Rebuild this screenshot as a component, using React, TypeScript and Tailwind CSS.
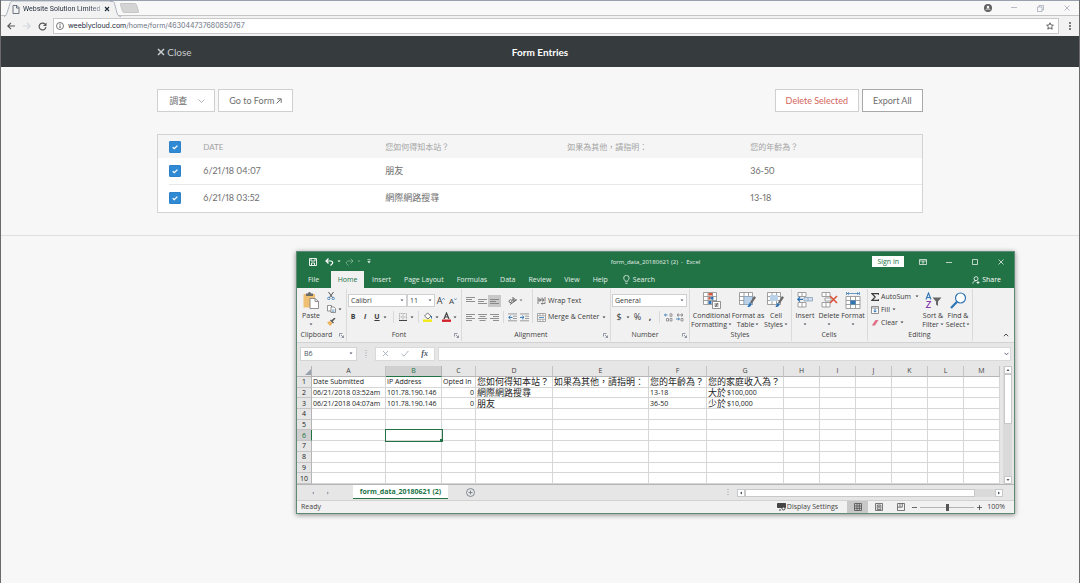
import { useState, type ReactNode } from 'react'
import clsx from 'clsx'

const WEB_FONT = "font-[Lato,'Noto_Sans_CJK_TC',sans-serif]"
const UI_FONT = "font-['Open_Sans','Noto_Sans_CJK_TC',sans-serif]"

/* ---------- small drawing helpers ---------- */

type IconProps = { w: number; h?: number; className?: string; children: ReactNode }

function Icon({ w, h = w, className, children }: IconProps) {
  return (
    <svg width={w} height={h} viewBox={`0 0 ${w} ${h}`} fill="none" stroke="currentColor" aria-hidden="true" className={clsx('shrink-0', className)}>
      {children}
    </svg>
  )
}

function Caret({ className }: { className?: string }) {
  return (
    <Icon w={4} h={3} className={className}>
      <path d="M.5 .5h3L2 2.3z" fill="currentColor" stroke="none" />
    </Icon>
  )
}

function Launcher() {
  return (
    <Icon w={5} className="text-gray-500">
      <path d="M.5 3.5v-3h3M2 2l2.5 2.5M4.5 2.5v2h-2" strokeWidth=".7" />
    </Icon>
  )
}

function Lines({ widths, align = 'left' }: { widths: number[]; align?: 'left' | 'center' | 'right' }) {
  return (
    <Icon w={9} h={9}>
      {widths.map((w, i) => {
        const x = align === 'left' ? 0 : align === 'center' ? (9 - w) / 2 : 9 - w
        return <path key={i} d={`M${x} ${1.5 + i * 2}h${w}`} strokeWidth=".8" />
      })}
    </Icon>
  )
}

const sheetIcon = <path d="M.5 .5h13v12H.5zM.5 4.5h13M.5 8.5h13M5 .5v12M9.5 .5v12" fill="#fff" stroke="#8a8a8a" strokeWidth=".8" />

/* ---------- browser ---------- */

function BrowserChrome() {
  return (
    <div className="border-t border-gray-400 font-[Roboto,sans-serif] text-[7px] leading-[10px] text-gray-800">
      <div className="flex h-[15px] items-stretch border-b border-[#c4c4c4] bg-[#f8f8f8] pl-[3px]">
        <div className="-mb-px flex items-center">
          <Icon w={8} h={16} className="text-gray-400">
            <path d="M0 16C2 15 2 14 3 12L6 2.500C6.500 1 7 .5 8 .5V16z" fill="#f2f2f2" stroke="none" />
            <path d="M0 15.500C2 15 2 14 3 12L6 2.500C6.500 1 7 .5 8 .5" strokeWidth=".8" />
          </Icon>
          <div className="flex h-full items-center border-t border-gray-300 bg-[#f2f2f2]">
            <Icon w={8} h={9} className="mr-[3px] text-gray-600">
              <path d="M1 .5h4l2 2v6H1zM4.500 .5v2.500H7" strokeWidth=".8" />
            </Icon>
            <span className="bg-linear-to-r from-gray-800 from-85% to-gray-400 bg-clip-text whitespace-nowrap text-transparent">Website Solution Limited</span>
            <button aria-label="Close tab" className="ml-[4px]">
              <Icon w={6}><path d="M1 1l4 4M5 1L1 5" strokeWidth="1.100" /></Icon>
            </button>
          </div>
          <Icon w={11} h={16} className="text-gray-400">
            <path d="M0 .5h2C3.500 .5 4 1 4.500 2.500L7 12c.6 2 1 3 4 3.500V16H0z" fill="#f2f2f2" stroke="none" />
            <path d="M0 .5h2C3.500 .5 4 1 4.500 2.500L7 12c.6 2 1 3 4 3.500" strokeWidth=".8" />
          </Icon>
        </div>
        <button aria-label="New tab" className="mt-[2px] h-[10px] w-[17px] skew-x-[18deg] rounded-[2px] border border-[#c6c6c6] bg-[#d4d4d4]" />
        <div className="ml-auto flex items-center gap-[20px] pr-[9px] text-gray-400">
          <Icon w={8} className="-mr-px text-[#5f5f5f]">
            <circle cx="4" cy="4" r="4" fill="currentColor" stroke="none" />
            <circle cx="4" cy="3" r="1.300" fill="#f8f8f8" stroke="none" />
            <path d="M1.600 5.800C2.500 4.600 5.500 4.600 6.400 5.800" stroke="#f8f8f8" />
          </Icon>
          <Icon w={6}><path d="M0 2.500h6" strokeWidth=".7" /></Icon>
          <Icon w={7}><path d="M.5 2h4.500v4.500H.5zM2 2V.5h4.500V5H5" strokeWidth=".7" /></Icon>
          <Icon w={6}><path d="M.5 .5l5 5M5.500 .5l-5 5" strokeWidth=".7" /></Icon>
        </div>
      </div>
      <div className="flex h-[20px] items-center bg-[#f2f2f2] pr-[8px] pl-[6px] text-[#555]">
        <button aria-label="Back" className="mr-[8px]">
          <Icon w={8}><path d="M8 4H1M4 .8L.8 4 4 7.200" strokeWidth="1.100" /></Icon>
        </button>
        <button aria-label="Forward" className="mr-[7px] text-gray-300">
          <Icon w={8}><path d="M0 4h7M4 .8L7.200 4 4 7.200" strokeWidth="1.100" /></Icon>
        </button>
        <button aria-label="Reload" className="mr-[6px]">
          <Icon w={9}><path d="M7 2.200A3.400 3.400 0 1 0 7.900 5" strokeWidth="1.200" /><path d="M8.500 .5v3.500H5z" fill="currentColor" stroke="none" /></Icon>
        </button>
        <div className="flex h-[16px] flex-1 items-center border border-[#c9c9c9] bg-white pr-[4px] pl-[2px]">
          <Icon w={8} className="mr-[4px]">
            <circle cx="4" cy="4" r="3.500" strokeWidth=".8" />
            <path d="M4 3.500V6M4 1.800v1" strokeWidth="1" />
          </Icon>
          <span className="flex-1 font-[Inter,sans-serif] text-gray-500">
            <span className="text-gray-800">weeblycloud.com</span>/home/form/463044737680850767
          </span>
          <button aria-label="Bookmark">
            <Icon w={8}><path d="M4 .8l1 2.200 2.400.2-1.800 1.600.6 2.400L4 5.900 1.800 7.200l.6-2.400L.6 3.200 3 3z" strokeWidth=".9" /></Icon>
          </button>
        </div>
        <button aria-label="Menu" className="ml-[10px]">
          <Icon w={2} h={8}><path d="M0 1h2M0 4h2M0 7h2" strokeWidth="1.400" /></Icon>
        </button>
      </div>
    </div>
  )
}

/* ---------- form entries page ---------- */

const entries = [
  { date: '6/21/18 04:07', source: '朋友', other: '', age: '36-50' },
  { date: '6/21/18 03:52', source: '網際網路搜尋', other: '', age: '13-18' }
]

function Tick({ label }: { label: string }) {
  return (
    <label className="grid size-[12px]">
      <input type="checkbox" defaultChecked aria-label={label} className="peer col-start-1 row-start-1 size-[12px] appearance-none rounded-[1px] border border-[#2c83cc] checked:bg-[#2f8ad3]" />
      <Icon w={12} className="pointer-events-none col-start-1 row-start-1 hidden text-white peer-checked:block">
        <path d="M3.700 6.200L5.300 7.700 8.400 4.600" strokeWidth="1.300" />
      </Icon>
    </label>
  )
}

function EntriesTable() {
  return (
    <div className="border border-[#d3d3d3] bg-white">
      <table className="w-full table-fixed border-separate border-spacing-0 text-left">
        <colgroup>
          <col className="w-[45px]" />
          <col className="w-[182px]" />
          <col className="w-[182px]" />
          <col className="w-[183px]" />
          <col />
        </colgroup>
        <thead>
          <tr className="h-[23px] bg-[#f5f5f5] text-[8px] text-[#a3a3a3] [&>th]:p-0 [&>th]:font-normal">
            <th><div className="ml-[11px]"><Tick label="Select all entries" /></div></th>
            <th>DATE</th>
            <th>您如何得知本站？</th>
            <th>如果為其他，請指明：</th>
            <th>您的年齡為？</th>
          </tr>
        </thead>
        <tbody className="text-[9px] text-[#6e6e6e] proportional-nums">
          {entries.map(e => (
            <tr key={e.date} className="group h-[27px] [&>td]:p-0">
              <td>
                <div className="ml-[11px] flex h-[27px] items-center border-b border-[#e8e8e8] group-last:border-transparent">
                  <Tick label={`Select entry ${e.date}`} />
                </div>
              </td>
              {[e.date, e.source, e.other, e.age].map((text, i) => (
                <td key={i} className="border-b border-[#e8e8e8] group-last:border-transparent">{text}</td>
              ))}
            </tr>
          ))}
        </tbody>
      </table>
    </div>
  )
}

function FormEntries() {
  return (
    <div className={clsx(WEB_FONT, 'text-[9px] leading-[12px] text-[#6e6e6e]')}>
      <header className="bg-[#363b3d] text-[10px]">
        <div className="mx-auto grid h-[31px] w-[71%] grid-cols-3 items-center">
          <a href="#close" className="flex items-center gap-[2px] text-[#c9cccd]">
            <Icon w={8}><path d="M1 1l6 6M7 1L1 7" strokeWidth="1.500" /></Icon>
            Close
          </a>
          <h1 className="text-center font-bold text-white">Form Entries</h1>
        </div>
      </header>
      <main className="border-b border-[#e0e0e0] py-[22px]">
        <div className="mx-auto w-[71%]">
          <div className="mb-[22px] flex h-[23px] gap-[3px]">
            <div className="grid w-[58px] items-center border border-[#d0d0d0] bg-white">
              <select aria-label="Form" className="col-start-1 row-start-1 h-full appearance-none pl-[11px]">
                <option>調查</option>
              </select>
              <Icon w={7} h={4} className="pointer-events-none col-start-1 row-start-1 mr-[9px] justify-self-end text-gray-400">
                <path d="M.5 .5l3 3 3-3" strokeWidth=".8" />
              </Icon>
            </div>
            <a href="#form" className="flex items-center gap-[2px] border border-[#d0d0d0] bg-white px-[10px]">
              Go to Form
              <Icon w={6}><path d="M.5 5.500l4-4M1.200 .8h4v4" strokeWidth="1" /></Icon>
            </a>
            <button className="ml-auto border border-[#d0d0d0] bg-white px-[10px] text-[#d4655c]">Delete Selected</button>
            <button className="border border-[#a8a8a8] bg-white px-[10px]">Export All</button>
          </div>
          <EntriesTable />
        </div>
      </main>
    </div>
  )
}

/* ---------- spreadsheet window ---------- */

const menuTabs = ['Insert', 'Page Layout', 'Formulas', 'Data', 'Review', 'View', 'Help']

function TitleBar() {
  return (
    <div className="grid h-[19px] grid-cols-[1fr_auto_1fr] items-center bg-[#217346] text-white">
      <div className="flex items-center pl-[12px]">
        <button aria-label="Save" className="mr-[8px]">
          <Icon w={8}><path d="M.5 .5h7v7h-7zM2 .5v2.500h4V.5M2.500 7.500V5h3v2.500" strokeWidth=".9" /></Icon>
        </button>
        <button aria-label="Undo" className="mr-[3px]">
          <Icon w={9} h={8}><path d="M1 3h4.500C7.500 3 8 4.500 7.500 5.500L5.500 7.500M3.500 .5L1 3l2.500 2.500" strokeWidth="1.200" /></Icon>
        </button>
        <Caret />
        <button aria-label="Redo" className="mr-[3px] ml-[4px] text-white/35">
          <Icon w={9} h={8}><path d="M8 3H3.500C1.500 3 1 4.500 1.500 5.500l2 2M5.500 .5L8 3 5.500 5.500" strokeWidth="1" /></Icon>
        </button>
        <Caret className="text-white/35" />
        <Icon w={4} h={5} className="ml-[6px]"><path d="M.5 .7h3" strokeWidth=".7" /><path d="M.3 2.200h3.400L2 4.200z" fill="currentColor" stroke="none" /></Icon>
      </div>
      <div className="text-[6px] text-[#e6f1eb]">form_data_20180621 (2)&nbsp; -&nbsp; Excel</div>
      <div className="flex items-center justify-end pr-[10px]">
        <button className="mr-[15px] h-[11px] bg-white px-[5px] leading-[10px] text-[#217346]">Sign in</button>
        <Icon w={8} className="mr-[19px]"><path d="M.5 1.500h7v5h-7zM.5 3h7M4 3.500v2.500M3 4.500l1-1 1 1" strokeWidth=".7" /></Icon>
        <Icon w={6} className="mr-[20px]"><path d="M0 3.500h6" strokeWidth=".7" /></Icon>
        <Icon w={6} className="mr-[20px]"><path d="M.5 .5h5v5h-5z" strokeWidth=".7" /></Icon>
        <Icon w={6}><path d="M.5 .5l5 5M5.500 .5l-5 5" strokeWidth=".7" /></Icon>
      </div>
    </div>
  )
}

function MenuTabs() {
  return (
    <div className="flex h-[17px] items-stretch bg-[#217346] text-[#e3efe8]">
      <button className="mr-[4px] pr-[8px] pl-[11px]">File</button>
      <button className="mr-[2px] w-[33px] bg-[#f1f1f1] text-[#217346]">Home</button>
      {menuTabs.map(t => (
        <button key={t} className="pr-[7px] pl-[6px]">{t}</button>
      ))}
      <button className="flex items-center gap-[3px] pl-[8px]">
        <Icon w={7} h={9}><path d="M2.200 6.300C2 5 .7 4.600 .7 3a2.700 2.700 0 0 1 5.400 0c0 1.600-1.300 2-1.500 3.300zM2.300 8.300h2.200" strokeWidth=".8" /></Icon>
        Search
      </button>
      <button className="ml-auto flex items-center gap-[2px] pr-[13px] text-white">
        <Icon w={8}><circle cx="4" cy="2.700" r="2" strokeWidth=".8" /><path d="M.8 7.600C1 5.500 2.500 4.700 4 4.700M4.500 6.500h3M6 5v3" strokeWidth=".8" /></Icon>
        Share
      </button>
    </div>
  )
}

function Group({ label, width, launcher, children }: { label: string; width: string; launcher?: boolean; children: ReactNode }) {
  return (
    <section aria-label={label} className={clsx('flex shrink-0 flex-col border-r border-[#dadada]', width)}>
      <div className="flex-1">{children}</div>
      <div className="flex h-[12px] items-center pr-px text-center font-medium text-[#444]">
        <span className="flex-1 whitespace-nowrap">{label}</span>
        {launcher && <span className="pr-px pl-[3px]"><Launcher /></span>}
      </div>
    </section>
  )
}

function BigButton({ icon, lines, caret, width }: { icon: ReactNode; lines: string[]; caret?: boolean; width: string }) {
  return (
    <button className={clsx('flex shrink-0 flex-col items-center pt-[3px] leading-[9px] whitespace-nowrap', width)}>
      <span className="flex h-[19px] items-start justify-center">{icon}</span>
      <span>{lines[0]}</span>
      <span className="flex h-[9px] items-center gap-px">
        {lines[1]}
        {caret && <Caret className="text-gray-600" />}
      </span>
    </button>
  )
}

function Combo({ label, value, width }: { label: string; value: string; width: string }) {
  return (
    <div className={clsx('grid h-[13px] items-center border border-[#cfcfcf] bg-white', width)}>
      <select aria-label={label} className="col-start-1 row-start-1 w-full appearance-none pl-[2px] leading-[10px]">
        <option>{value}</option>
      </select>
      <Caret className="pointer-events-none col-start-1 row-start-1 mr-[2px] justify-self-end text-gray-600" />
    </div>
  )
}

function Slot({ label, width = 'w-[12px]', className, children }: { label: string; width?: string; className?: string; children: ReactNode }) {
  return (
    <button aria-label={label} className={clsx('flex h-[12px] shrink-0 items-center justify-center', width, className)}>
      {children}
    </button>
  )
}

function Divider() {
  return <span className="mx-[2px] h-[12px] w-px shrink-0 bg-[#dadada]" />
}

function Brush({ x, y }: { x: number; y: number }) {
  return (
    <g transform={`translate(${x} ${y})`}>
      <path d="M7 0L3 6.500 4.600 7.800 9 1.500z" fill="#6b6b6b" stroke="none" />
      <path d="M0 11c1.500-.3 1.300-3.500 3-4.200l1.600 1.400C4.500 10 2.500 11.500 0 11z" fill="#2f75b5" stroke="none" />
    </g>
  )
}

function Ribbon() {
  return (
    <div className="flex h-[55px] border-b border-[#d2d2d2] bg-[#f1f1f1] py-px text-[#3b3b3b]">
      <Group label="Clipboard" width="w-[50px]" launcher>
        <div className="flex">
          <BigButton
            width="w-[28px]"
            lines={['Paste']}
            caret
            icon={
              <Icon w={16} h={17}>
                <path d="M.5 2h11.500v13.500H.5z" fill="#efbf73" stroke="none" />
                <path d="M3 1.500h2a1.500 1.500 0 0 1 3 0h2v2.500H3z" fill="#6a6a6a" stroke="none" />
                <path d="M7 6.500h5l3.500 3v7H7z" fill="#fff" stroke="#777" strokeWidth=".8" />
                <path d="M12 6.500v3h3.500" stroke="#777" strokeWidth=".8" />
              </Icon>
            }
          />
          <div className="flex flex-col gap-px pt-px">
            <Slot label="Cut"><Icon w={8}><path d="M1.500 0L5.500 5.500M6.500 0L2.500 5.500" stroke="#555" /><circle cx="1.800" cy="6.500" r="1.200" stroke="#2f75b5" strokeWidth=".8" /><circle cx="6.200" cy="6.500" r="1.200" stroke="#2f75b5" strokeWidth=".8" /></Icon></Slot>
            <div className="flex items-center gap-px">
              <Slot label="Copy"><Icon w={9} h={8}><path d="M.5 .5h4v5.500h-4z" fill="#fff" stroke="#777" strokeWidth=".8" /><path d="M4 2h3l1.500 1.500v4H4z" fill="#fff" stroke="#777" strokeWidth=".8" /><path d="M5 5h2.500M5 6.300h2.500" stroke="#2f75b5" strokeWidth=".6" /></Icon></Slot>
              <Caret />
            </div>
            <Slot label="Format painter"><Icon w={9} h={8}><path d="M8 0L5 3" stroke="#555" strokeWidth="1.600" /><path d="M3.500 2L6.500 5" stroke="#555" strokeWidth="1.200" /><path d="M3 3L0 4.500 3 8l2.500-2.500z" fill="#efb35c" stroke="none" /></Icon></Slot>
          </div>
        </div>
      </Group>

      <Group label="Font" width="w-[115px]" launcher>
        <div className="flex items-center pt-[5px] pl-px">
          <Combo label="Font name" value="Calibri" width="w-[59px]" />
          <Combo label="Font size" value="11" width="w-[28px]" />
          <Slot label="Increase font size" className="text-[9px]">A<Icon w={3} h={6}><path d="M0 1.800L1.500 .3 3 1.800" stroke="#2f75b5" strokeWidth=".8" /></Icon></Slot>
          <Slot label="Decrease font size" className="text-[8px]">A<Icon w={3} h={6}><path d="M0 .3L1.500 1.800 3 .3" stroke="#2f75b5" strokeWidth=".8" /></Icon></Slot>
        </div>
        <div className="flex items-center pt-[4px]">
          <Slot label="Bold" className="font-bold">B</Slot>
          <Slot label="Italic" className="font-bold italic">I</Slot>
          <Slot label="Underline" className="font-bold underline">U</Slot>
          <Caret className="mr-[4px]" />
          <Divider />
          <Slot label="Borders" width="w-[14px]"><Icon w={8}><path d="M.5 .5h7v7h-7zM4 .5v7M.5 4h7" stroke="#9a9a9a" strokeWidth=".7" strokeDasharray="1 .5" /><path d="M0 7.500h8" stroke="#444" /></Icon></Slot>
          <Caret className="mr-[2px]" />
          <Divider />
          <Slot label="Fill colour" width="w-[14px]"><Icon w={10} h={10}><path d="M4.500 1L8 4 5 7 1.500 4z" fill="#fff" stroke="#666" strokeWidth=".9" /><path d="M8.500 4v2.500" stroke="#2f75b5" /><path d="M0 8.700h9" stroke="#f2ea12" strokeWidth="2.400" /></Icon></Slot>
          <Caret />
          <Slot label="Font colour" width="w-[14px]"><Icon w={9} h={10}><path d="M2 7L4.500 1 7 7M3 5h3" stroke="#444" strokeWidth="1.200" /><path d="M0 8.700h9" stroke="#d3202a" strokeWidth="2.400" /></Icon></Slot>
          <Caret />
        </div>
      </Group>

      <Group label="Alignment" width="w-[149px]" launcher>
        <div className="flex gap-[2px] text-[#777]">
          <div className="w-[71px] border-r border-[#dadada] pt-[5px] pl-[2px]">
            <div className="flex h-[13px] items-center">
              <Slot label="Top align"><Lines widths={[9, 6, 9]} /></Slot>
              <Slot label="Middle align"><Lines widths={[0, 9, 6, 9]} /></Slot>
              <Slot label="Bottom align" width="w-[13px]" className="bg-[#c8c8c8]"><Lines widths={[0, 9, 6, 9]} /></Slot>
              <Slot label="Orientation" width="w-[28px]"><Icon w={10} h={9}><path d="M1 5.500c0-2 3-2.500 3-.5s-3 2-3 .5M5 1v4c1.500 1 3-1 2-2-.6-.6-2 0-2 1M2 8.500L9 3.500" stroke="#555" strokeWidth=".9" /></Icon><Caret className="ml-px" /></Slot>
            </div>
            <div className="flex items-center pt-[4px]">
              <Slot label="Align left"><Lines widths={[9, 6, 9, 6]} /></Slot>
              <Slot label="Align centre"><Lines widths={[9, 6, 9, 6]} align="center" /></Slot>
              <Slot label="Align right" width="w-[13px]"><Lines widths={[9, 6, 9, 6]} align="right" /></Slot>
              <Divider />
              <Slot label="Decrease indent"><Icon w={9}><path d="M0 .9h9M5 3.200h4M5 5.500h4M0 7.800h9" strokeWidth=".7" /><path d="M4.500 4.400H.8M2.500 2.600L.7 4.400l1.800 1.800" stroke="#2f75b5" /></Icon></Slot>
              <Slot label="Increase indent"><Icon w={9}><path d="M0 .9h9M5 3.200h4M5 5.500h4M0 7.800h9" strokeWidth=".7" /><path d="M0 4.400h4M2.200 2.600L4 4.400 2.200 6.200" stroke="#2f75b5" /></Icon></Slot>
            </div>
          </div>
          <div className="pt-[5px] pl-[2px] whitespace-nowrap text-[#3b3b3b]">
            <button className="flex h-[13px] items-center gap-[2px]">
              <Icon w={9}><path d="M1 1v7M8 1v4M2 3h1.500v2H2zM5 1.500v3.500h1.500V3H5M8 5.500v2H4.500M5.500 6.300L4.300 7.500l1.200 1.200" stroke="#666" strokeWidth=".8" /></Icon>
              Wrap Text
            </button>
            <button className="mt-[4px] flex h-[12px] items-center gap-[2px]">
              <Icon w={9}><path d="M.5 .5h8v8h-8zM.5 2.800h8M.5 6.200h8M3 .5v2.300M6 .5v2.300M3 6.200v2.300M6 6.200v2.300" fill="#fff" stroke="#888" strokeWidth=".7" /><path d="M2 4.500h5" stroke="#2f75b5" strokeWidth=".8" /></Icon>
              Merge &amp; Center
              <Caret className="ml-px" />
            </button>
          </div>
        </div>
      </Group>

      <Group label="Number" width="w-[79px]" launcher>
        <div className="flex pt-[5px] pl-px"><Combo label="Number format" value="General" width="w-[75px]" /></div>
        <div className="flex items-center pt-[4px] pl-[2px] text-[9px]">
          <Slot label="Currency">$</Slot>
          <Caret className="ml-px" />
          <Slot label="Percent" width="w-[15px]">%</Slot>
          <Slot label="Comma" width="w-[10px]" className="font-bold">,</Slot>
          <span className="pl-[2px]" />
          <Divider />
          {[0, 1].map(i => (
            <Slot key={i} label={i ? 'Decrease decimal' : 'Increase decimal'}>
              <Icon w={9}>
                <path d={i ? 'M0 6h3.500M2 4.700L3.500 6 2 7.300' : 'M3.500 2H.5M2 .7L.5 2 2 3.300'} stroke="#2f75b5" strokeWidth=".8" />
                <path d={i ? 'M1.500 1h1.500v2H1.500zM5 1h1.500v2H5zM5 5.500h2V8H5z' : 'M6 .8h2v2.500H6zM2.500 5.500h2V8h-2zM6 5.500h2V8H6z'} stroke="#777" strokeWidth=".7" />
              </Icon>
            </Slot>
          ))}
        </div>
      </Group>

      <Group label="Styles" width="w-[102px]">
        <div className="flex pl-[2px]">
          <BigButton width="w-[39px]" caret lines={['Conditional', 'Formatting']} icon={
            <Icon w={18} h={17}>
              {sheetIcon}
              <path d="M5.500 1h4v2.500h-4zM5.500 5h2v2.500h-2z" fill="#d9533a" stroke="none" />
              <path d="M7.500 5h3v2.500h-3zM5.500 9h3v3h-3z" fill="#2f75b5" stroke="none" />
              <path d="M9.500 9.500h8v7h-8z" fill="#fff" stroke="#777" strokeWidth=".8" />
              <path d="M11.500 12h4M11.500 14h4M14.500 11l-2 4" stroke="#444" strokeWidth=".8" />
            </Icon>
          } />
          <BigButton width="w-[34px]" caret lines={['Format as', 'Table']} icon={
            <Icon w={18} h={17}>
              {sheetIcon}
              <path d="M5 4.500h8.500v8H5z" fill="#b9d2ea" stroke="#7d9cba" strokeWidth=".6" />
              <Brush x={8} y={4} />
            </Icon>
          } />
          <BigButton width="w-[22px]" caret lines={['Cell', 'Styles']} icon={
            <Icon w={18} h={17}>
              {sheetIcon}
              <path d="M3 3h8v6H3z" fill="#b9d2ea" stroke="none" />
              <Brush x={8} y={4} />
            </Icon>
          } />
        </div>
      </Group>

      <Group label="Cells" width="w-[76px]">
        <div className="flex pl-px">
          <BigButton width="w-[24px]" caret lines={['Insert']} icon={
            <Icon w={16}>
              <path d="M1 .5h8v4H1zM5 .5v4M1 10.500h8v4.500H1zM5 10.500v4.500" fill="#fff" stroke="#8a8a8a" strokeWidth=".8" />
              <path d="M7 5.500h8.500v3.500H7zM11 5.500v3.500" fill="#cfe0f1" stroke="#7f97ad" strokeWidth=".7" />
              <path d="M6 7.300H.8M3 5L.8 7.300 3 9.500" stroke="#2f75b5" strokeWidth="1.300" />
            </Icon>
          } />
          <BigButton width="w-[24px]" caret lines={['Delete']} icon={
            <Icon w={17} h={16}>
              <path d="M1 .5h8v4H1zM5 .5v4M1 10.500h8v4.500H1zM5 10.500v4.500M4 6h6v3H4z" fill="#fff" stroke="#8a8a8a" strokeWidth=".8" />
              <path d="M9 4l7 7M16 4l-7 7" stroke="#d9533a" strokeWidth="1.600" />
            </Icon>
          } />
          <BigButton width="w-[24px]" caret lines={['Format']} icon={
            <Icon w={16} h={17}>
              <path d="M1 4.500h14v12H1zM5.500 4.500v12M10.500 4.500v12M1 8.500h14M1 12.500h14" fill="#fff" stroke="#8a8a8a" strokeWidth=".8" />
              <path d="M5.500 8.500h5v4h-5z" fill="#2f75b5" stroke="none" />
              <path d="M1.500 0v3M14.500 0v3M2 1.500h12M4 .3L2.500 1.500 4 2.700M12 .3l1.500 1.200L12 2.700" stroke="#2f75b5" strokeWidth=".7" />
            </Icon>
          } />
        </div>
      </Group>

      <Group label="Editing" width="w-[105px]">
        <div className="flex">
          <div className="flex w-[52px] shrink-0 flex-col pt-px pl-[3px] whitespace-nowrap">
            <button className="flex h-[13px] items-center gap-[2px]">
              <Icon w={8}><path d="M7.500 1.700V.6H1L4.200 4 1 7.400h6.500V6.300" strokeWidth="1.200" /></Icon>
              AutoSum
              <Caret className="ml-[2px]" />
            </button>
            <button className="flex h-[13px] items-center gap-[2px]">
              <Icon w={8}><path d="M.5 .5h7v7h-7zM.5 2h7" fill="#fff" stroke="#777" strokeWidth=".8" /><path d="M4 2.500V6M2.500 4.700L4 6.200l1.500-1.500" stroke="#2f75b5" /></Icon>
              Fill
              <Caret />
            </button>
            <button className="flex h-[13px] items-center gap-[2px]">
              <Icon w={8}><path d="M4.500 1h3L4 6.500H.8z" fill="#e0708a" stroke="none" /></Icon>
              Clear
              <Caret />
            </button>
          </div>
          <BigButton width="w-[26px]" caret lines={['Sort &', 'Filter']} icon={
            <Icon w={17} h={17}>
              <path d="M1 7.500L3.500 1 6 7.500M2 5.500h3" stroke="#2f75b5" strokeWidth="1.100" />
              <path d="M1.500 9.500h4L1.500 15.500h4.300" stroke="#8a3fae" strokeWidth="1.100" />
              <path d="M7.500 5.500h9L13 9.500V14l-2-1.500v-3z" fill="#666" stroke="none" />
            </Icon>
          } />
          <BigButton width="w-[24px]" caret lines={['Find &', 'Select']} icon={
            <Icon w={17} h={17}>
              <circle cx="10.500" cy="6" r="5" fill="#fff" stroke="#2f75b5" strokeWidth="1.200" />
              <path d="M7 9.800L1 16" stroke="#2f75b5" strokeWidth="2.200" />
            </Icon>
          } />
        </div>
      </Group>

      <button aria-label="Collapse ribbon" className="mt-auto mr-[5px] mb-[4px] ml-auto">
        <Icon w={6} h={4}><path d="M.8 3.200L3 1l2.200 2.200" strokeWidth=".9" /></Icon>
      </button>
    </div>
  )
}

function FormulaBar() {
  return (
    <div className="flex h-[23px] items-center bg-[#e6e6e6] px-[3px] pb-[2px] text-gray-600">
      <div className="grid h-[14px] w-[57px] items-center border border-[#d4d4d4] bg-white">
        <input aria-label="Name box" defaultValue="B6" className="col-start-1 row-start-1 w-full min-w-0 pl-[3px]" />
        <Caret className="pointer-events-none col-start-1 row-start-1 mr-[3px] justify-self-end" />
      </div>
      <Icon w={2} h={8} className="mx-[8px] text-gray-400"><path d="M1 0v8" strokeDasharray="1 1.500" /></Icon>
      <div className="mr-[3px] flex h-[14px] w-[60px] items-center justify-around border border-[#d9d9d9] bg-white text-gray-400">
        <button aria-label="Cancel"><Icon w={7}><path d="M1 1l5 5M6 1L1 6" strokeWidth=".8" /></Icon></button>
        <button aria-label="Enter"><Icon w={8} h={7}><path d="M.5 4L3 6.200 7.500 .8" strokeWidth=".8" /></Icon></button>
        <button aria-label="Insert function" className="font-['Liberation_Serif',serif] text-[8px] font-bold text-gray-600 italic">fx</button>
      </div>
      <div className="grid h-[14px] flex-1 items-center border border-[#d9d9d9] bg-white">
        <input aria-label="Formula" className="col-start-1 row-start-1 w-full" />
        <Icon w={5} h={4} className="pointer-events-none col-start-1 row-start-1 mr-px justify-self-end"><path d="M.5 .8l2 2 2-2" strokeWidth=".9" /></Icon>
      </div>
    </div>
  )
}

const columns = [
  { name: 'A', width: 'w-[74px]' },
  { name: 'B', width: 'w-[56px]' },
  { name: 'C', width: 'w-[34px]' },
  { name: 'D', width: 'w-[77px]' },
  { name: 'E', width: 'w-[96px]' },
  { name: 'F', width: 'w-[58px]' },
  { name: 'G', width: 'w-[77px]' },
  { name: 'H', width: 'w-[36px]' },
  { name: 'I', width: 'w-[36px]' },
  { name: 'J', width: 'w-[36px]' },
  { name: 'K', width: 'w-[36px]' },
  { name: 'L', width: 'w-[36px]' },
  { name: 'M', width: 'w-[36px]' }
]

const cells: Record<string, ReactNode> = {
  A1: 'Date Submitted',
  B1: 'IP Address',
  C1: 'Opted In',
  D1: <Cjk>您如何得知本站？</Cjk>,
  E1: <Cjk>如果為其他，請指明：</Cjk>,
  F1: <Cjk>您的年齡為？</Cjk>,
  G1: <Cjk>您的家庭收入為？</Cjk>,
  A2: '06/21/2018 03:52am',
  B2: '101.78.190.146',
  C2: '0',
  D2: <Cjk>網際網路搜尋</Cjk>,
  F2: '13-18',
  G2: <><Cjk>大於</Cjk> $100,000</>,
  A3: '06/21/2018 04:07am',
  B3: '101.78.190.146',
  C3: '0',
  D3: <Cjk>朋友</Cjk>,
  F3: '36-50',
  G3: <><Cjk>少於</Cjk> $10,000</>
}

function Cjk({ children }: { children: ReactNode }) {
  return <span className="text-[9px]">{children}</span>
}

function Grid() {
  const [selected, setSelected] = useState('B6')
  const selCol = selected[0]
  const selRow = Number(selected.slice(1))
  return (
    <table className="h-[118px] w-[703px] table-fixed border-separate border-spacing-0 bg-white text-[#222]">
      <thead>
        <tr className="h-[11px] bg-[#e6e6e6] text-[#444]">
          <th className="w-[15px] border-r border-b border-[#b5b5b5] p-0">
            <Icon w={6} className="mt-[2px] ml-auto text-gray-400"><path d="M6 0v6H0z" fill="currentColor" stroke="none" /></Icon>
          </th>
          {columns.map(c => (
            <th
              key={c.name}
              className={clsx('border-r border-b p-0 text-center leading-[10px] font-normal', c.width,
                c.name === selCol ? 'border-r-[#b5b5b5] border-b-[#217346] bg-[#d0d0d0] text-[#217346]' : 'border-r-[#c4c4c4] border-b-[#b5b5b5]')}
            >
              {c.name}
            </th>
          ))}
        </tr>
      </thead>
      <tbody>
        {Array.from({ length: 10 }, (_, i) => i + 1).map(r => (
          <tr key={r}>
            <th className={clsx('border-r border-b p-0 text-center leading-[9px] font-normal',
              r === selRow ? 'border-r-[#217346] border-b-[#c4c4c4] bg-[#d0d0d0] text-[#217346]' : 'border-r-[#b5b5b5] border-b-[#c4c4c4] bg-[#e6e6e6]')}
            >
              {r}
            </th>
            {columns.map(c => {
              const id = c.name + r
              const active = id === selected
              return (
                <td
                  key={id}
                  onClick={() => setSelected(id)}
                  className={clsx('border-r border-b border-[#d6d6d6] p-0 px-px', active && 'relative outline-1 outline-[#217346]')}
                >
                  <div className={clsx('flex h-[9px] items-center gap-px leading-[9px] whitespace-nowrap', c.name === 'C' && r > 1 && 'justify-end')}>
                    {cells[id]}
                  </div>
                  {active && <span className="absolute -right-[2px] -bottom-[2px] size-[3px] bg-[#217346]" />}
                </td>
              )
            })}
          </tr>
        ))}
      </tbody>
    </table>
  )
}

function ScrollArrow({ label, d }: { label: string; d: string }) {
  return (
    <button aria-label={label} className="grid size-[8px] shrink-0 place-items-center border border-[#c8c8c8] bg-white text-gray-600">
      <Icon w={4}><path d={d} fill="currentColor" stroke="none" /></Icon>
    </button>
  )
}

function SheetBar() {
  return (
    <div className="flex h-[16px] border-t border-[#b5b5b5] bg-[#e6e6e6]">
      <div className="flex w-[56px] items-center gap-[11px] pl-[14px] text-gray-400">
        <Icon w={4}><path d="M3 .5L1 2l2 1.500z" fill="currentColor" stroke="none" /></Icon>
        <Icon w={4}><path d="M1 .5L3 2 1 3.500z" fill="currentColor" stroke="none" /></Icon>
      </div>
      <button className="h-[14px] w-[95px] border-b border-[#217346] bg-white font-bold whitespace-nowrap text-[#217346]">form_data_20180621 (2)</button>
      <button aria-label="New sheet" className="ml-[18px] text-gray-500">
        <Icon w={9}><circle cx="4.500" cy="4.500" r="4" strokeWidth=".8" /><path d="M2.500 4.500h4M4.500 2.500v4" strokeWidth=".8" /></Icon>
      </button>
      <div className="ml-auto flex items-center pr-[11px]">
        <Icon w={2} h={7} className="mr-[8px] text-gray-400"><path d="M1 0v7" strokeDasharray="1 1.500" /></Icon>
        <ScrollArrow label="Scroll left" d="M3 .5L1 2l2 1.500z" />
        <div className="flex w-[250px] bg-[#dadada]">
          <div className="h-[8px] w-[230px] border border-[#c8c8c8] bg-white" />
        </div>
        <ScrollArrow label="Scroll right" d="M1 .5L3 2 1 3.500z" />
      </div>
    </div>
  )
}

function StatusBar() {
  return (
    <div className="flex h-[13px] items-center border-t border-[#d2d2d2] bg-[#f1f1f1] text-[#444]">
      <span className="pl-[4px]">Ready</span>
      <button className="ml-auto flex items-center gap-px">
        <Icon w={9} h={8}><path d="M.5 .5h8v4h-8z" fill="#444" stroke="#444" /><path d="M2 7h2" /><circle cx="6.500" cy="5.500" r="1.500" fill="#f1f1f1" stroke="#444" /></Icon>
        Display Settings
      </button>
      <button aria-label="Normal view" className="ml-[9px] grid h-[12px] w-[21px] place-items-center bg-[#c8c8c8]">
        <Icon w={8}><path d="M.5 .5h7v7h-7zM.5 3h7M.5 5.300h7M3 .5v7M5.300 .5v7" strokeWidth=".7" /></Icon>
      </button>
      <button aria-label="Page layout view" className="grid w-[22px] place-items-center">
        <Icon w={8}><path d="M.5 .5h7v7h-7zM2.300 2h3.500v4.500H2.300zM3 3.300h2M3 4.800h2" strokeWidth=".7" /></Icon>
      </button>
      <button aria-label="Page break view" className="mr-px grid w-[21px] place-items-center">
        <Icon w={8}><path d="M.5 .5h7v7h-7zM3 .5v3.500M5.300 .5v3.500M.5 4.200h4.800" strokeWidth=".7" /></Icon>
      </button>
      <button aria-label="Zoom out"><Icon w={5}><path d="M0 2.500h5" strokeWidth=".8" /></Icon></button>
      <input
        type="range"
        aria-label="Zoom"
        defaultValue={50}
        className="mx-[3px] h-[9px] w-[54px] appearance-none bg-[linear-gradient(#b4b4b4,#b4b4b4)] bg-[length:100%_1px] bg-center bg-no-repeat [&::-webkit-slider-thumb]:h-[7px] [&::-webkit-slider-thumb]:w-[3px] [&::-webkit-slider-thumb]:appearance-none [&::-webkit-slider-thumb]:bg-[#555]"
      />
      <button aria-label="Zoom in"><Icon w={5}><path d="M0 2.500h5M2.500 0v5" strokeWidth=".8" /></Icon></button>
      <span className="pr-[9px] pl-[5px]">100%</span>
    </div>
  )
}

function SpreadsheetWindow() {
  return (
    <div className={clsx(UI_FONT, 'absolute top-[251px] left-[295px] w-[719px] border border-[#5f8a76] text-[7px] leading-[10px] shadow-[0_1px_5px_rgba(0,0,0,0.45)]')}>
      <TitleBar />
      <MenuTabs />
      <Ribbon />
      <FormulaBar />
      <div className="flex bg-[#e6e6e6]">
        <Grid />
        <div className="ml-[3px] flex w-[9px] flex-col items-center bg-[#dadada]">
          <ScrollArrow label="Scroll up" d="M.5 3L2 1l1.500 2z" />
          <div className="h-[50px] w-[8px] border border-[#c8c8c8] bg-white" />
          <div className="mt-auto"><ScrollArrow label="Scroll down" d="M.5 1L2 3l1.500-2z" /></div>
        </div>
      </div>
      <SheetBar />
      <StatusBar />
    </div>
  )
}

export default function App() {
  return (
    <div className="relative min-h-screen border-x border-[#6b6b6b] bg-[#f7f7f7]">
      <BrowserChrome />
      <FormEntries />
      <SpreadsheetWindow />
    </div>
  )
}
